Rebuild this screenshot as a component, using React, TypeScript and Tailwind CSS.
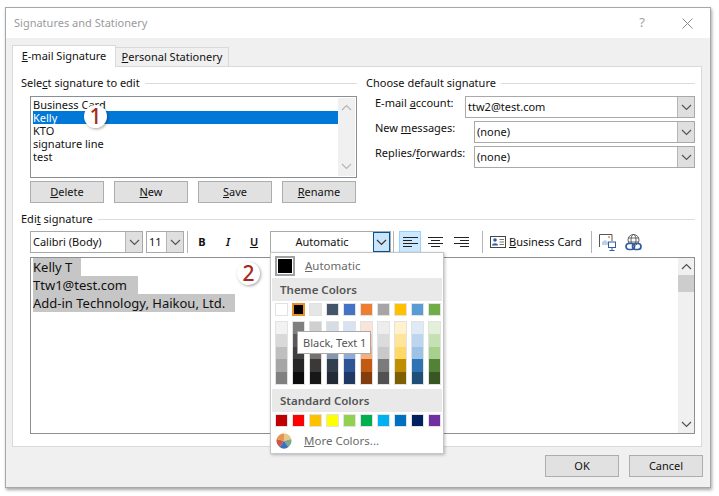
import type { ReactNode } from 'react';

const themeTop = [
  'bg-[#ffffff]', 'bg-[#000000]', 'bg-[#e7e6e6]', 'bg-[#44546a]', 'bg-[#4472c4]',
  'bg-[#ed7d31]', 'bg-[#a5a5a5]', 'bg-[#ffc000]', 'bg-[#5b9bd5]', 'bg-[#70ad47]',
];

const themeShades = [
  ['bg-[#f2f2f2]', 'bg-[#d9d9d9]', 'bg-[#bfbfbf]', 'bg-[#a6a6a6]', 'bg-[#808080]'],
  ['bg-[#7f7f7f]', 'bg-[#595959]', 'bg-[#404040]', 'bg-[#262626]', 'bg-[#0d0d0d]'],
  ['bg-[#d0cece]', 'bg-[#afabab]', 'bg-[#767171]', 'bg-[#3b3838]', 'bg-[#181717]'],
  ['bg-[#d6dce4]', 'bg-[#adb9ca]', 'bg-[#8496b0]', 'bg-[#323f4f]', 'bg-[#222a35]'],
  ['bg-[#d9e2f3]', 'bg-[#b4c6e7]', 'bg-[#8eaadb]', 'bg-[#2f5496]', 'bg-[#1f3864]'],
  ['bg-[#fbe4d5]', 'bg-[#f7caac]', 'bg-[#f4b083]', 'bg-[#c45911]', 'bg-[#833c0b]'],
  ['bg-[#ededed]', 'bg-[#dbdbdb]', 'bg-[#c9c9c9]', 'bg-[#7b7b7b]', 'bg-[#525252]'],
  ['bg-[#fff2cc]', 'bg-[#ffe599]', 'bg-[#ffd966]', 'bg-[#bf8f00]', 'bg-[#7f6000]'],
  ['bg-[#deeaf6]', 'bg-[#bdd6ee]', 'bg-[#9cc2e5]', 'bg-[#2e74b5]', 'bg-[#1f4e79]'],
  ['bg-[#e2efd9]', 'bg-[#c5e0b3]', 'bg-[#a8d08d]', 'bg-[#538135]', 'bg-[#375623]'],
];

const standard = [
  'bg-[#c00000]', 'bg-[#ff0000]', 'bg-[#ffc000]', 'bg-[#ffff00]', 'bg-[#92d050]',
  'bg-[#00b050]', 'bg-[#00b0f0]', 'bg-[#0070c0]', 'bg-[#002060]', 'bg-[#7030a0]',
];

function Chevron({ up = false }: { up?: boolean }) {
  return (
    <svg width="11" height="7" viewBox="0 0 11 7" fill="none" stroke="currentColor" strokeWidth="1.2">
      <path d={up ? 'M1 6 L5.5 1.5 L10 6' : 'M1 1 L5.5 5.5 L10 1'} />
    </svg>
  );
}

function Group({ label, className }: { label: ReactNode; className: string }) {
  return (
    <div className={`flex items-center gap-[5px] h-[14px] ${className}`}>
      <span className="whitespace-nowrap">{label}</span>
      <div className="flex-1 h-px bg-[#dcdcdc]" />
    </div>
  );
}

function Combo({ value, className }: { value: string; className: string }) {
  return (
    <div className={`h-[22px] flex border border-[#a9a9a9] bg-white ${className}`}>
      <span className="flex-1 pl-[2px] leading-[19px] whitespace-nowrap">{value}</span>
      <div className="w-[17px] bg-[#dfdfdf] border-l border-[#b5b5b5] flex items-center justify-center text-[#555555]">
        <Chevron />
      </div>
    </div>
  );
}

function Btn({ children, className = 'w-[74px]' }: { children: ReactNode; className?: string }) {
  return (
    <div className={`h-[22px] bg-[#e1e1e1] border border-[#adadad] flex items-center justify-center ${className}`}>
      <span>{children}</span>
    </div>
  );
}

function Sep() {
  return <div className="w-px h-[22px] bg-[#b4b4b4]" />;
}

function Field({ label, value, combo }: { label: ReactNode; value: string; combo: string }) {
  return (
    <div className="flex justify-between h-[22px] pl-[9px]">
      <span className="leading-[14px] whitespace-nowrap">{label}</span>
      <Combo value={value} className={combo} />
    </div>
  );
}

function Swatch({ color, className = 'border' }: { color: string; className?: string }) {
  return <div className={`w-[13px] h-[13px] border-[#e2e2e2] ${color} ${className}`} />;
}

function Badge({ n, className }: { n: string; className: string }) {
  return (
    <div className={`absolute w-[23px] h-[23px] rounded-full bg-white shadow-[1px_1px_3px_rgba(0,0,0,0.35)] flex items-center justify-center text-[21px] font-medium text-[#a52a1c] ${className}`}>
      {n}
    </div>
  );
}

function ColorMenu() {
  return (
    <div className="absolute left-[270px] top-[252px] w-[174px] h-[202px] bg-white border border-[#c6c6c6] shadow-[1px_1px_3px_rgba(0,0,0,0.25)] px-[1px] text-[11.5px]">
      <div className="flex items-center h-[25px] pl-[3px]">
        <div className="w-[20px] h-[20px] border-2 border-[#a0a0a0] p-px bg-white">
          <div className="w-full h-full bg-black" />
        </div>
        <span className="ml-[10px] text-[#6a6a6a]"><u>A</u>utomatic</span>
      </div>
      <div className="h-[23px] bg-[#e9e9e9] pl-[8px] leading-[23px] font-semibold text-[#555555]">Theme Colors</div>
      <div className="flex gap-[4px] pl-[3px] mt-[2px]">
        {themeTop.map((c, i) => (
          <Swatch key={c} color={c} className={i === 1 ? 'border-2 border-[#e8912d]' : 'border'} />
        ))}
      </div>
      <div className="flex gap-[4px] pl-[3px] mt-[5px]">
        {themeShades.map((col, i) => (
          <div key={i} className="w-[13px] h-[64px] border border-[#e2e2e2] flex flex-col">
            {col.map((c) => <div key={c} className={`flex-1 ${c}`} />)}
          </div>
        ))}
      </div>
      <div className="h-[23px] bg-[#e9e9e9] pl-[8px] leading-[23px] font-semibold text-[#555555] mt-[4px]">Standard Colors</div>
      <div className="flex gap-[4px] pl-[3px] mt-[2px]">
        {standard.map((c) => <Swatch key={c} color={c} />)}
      </div>
      <div className="flex items-center pl-[4px] mt-[5px] h-[18px]">
        <svg width="16" height="16" viewBox="0 0 16 16">
          <path d="M8 8 L8 0.5 A7.5 7.5 0 0 1 15.2 6 Z" fill="#e8c887" />
          <path d="M8 8 L15.2 6 A7.5 7.5 0 0 1 12.5 14 Z" fill="#7fa88c" />
          <path d="M8 8 L12.5 14 A7.5 7.5 0 0 1 3.5 14 Z" fill="#3f6fb5" />
          <path d="M8 8 L3.5 14 A7.5 7.5 0 0 1 0.8 6 Z" fill="#c9574a" />
          <path d="M8 8 L0.8 6 A7.5 7.5 0 0 1 8 0.5 Z" fill="#e8954f" />
        </svg>
        <span className="ml-[12px] text-[#6a6a6a]"><u>M</u>ore Colors...</span>
      </div>
    </div>
  );
}

export default function App() {
  return (
    <div className="relative w-[719px] h-[496px] bg-white pt-[7px] pl-[5px] text-[11px] text-[#111111] overflow-hidden font-['Noto_Sans',sans-serif]">
      <div className="w-[706px] h-[481px] border border-[#a8a8a8] shadow-[1px_2px_3px_rgba(0,0,0,0.35)] flex flex-col bg-[#f0f0f0]">
        <div className="h-[30px] bg-white flex items-center pl-[8px] pr-[17px] shrink-0">
          <span className="text-[11px] text-[#9b9b9b]">Signatures and Stationery</span>
          <span className="ml-auto mr-[37px] text-[13px] text-[#a0a0a0]">?</span>
          <svg width="11" height="11" viewBox="0 0 11 11" stroke="#8c8c8c" strokeWidth="1" fill="none">
            <path d="M0.5 0.5 L10.5 10.5 M10.5 0.5 L0.5 10.5" />
          </svg>
        </div>

        <div className="flex items-end pl-[6px] h-[28px] shrink-0">
          <div className="w-[104px] h-[22px] bg-white border border-b-0 border-[#d9d9d9] flex items-center justify-center -mb-px relative z-10">
            <span><u>E</u>-mail Signature</span>
          </div>
          <div className="w-[113px] h-[19px] pt-px bg-[#f0f0f0] border border-b-0 border-l-0 border-[#d9d9d9] flex items-center justify-center">
            <span><u>P</u>ersonal Stationery</span>
          </div>
        </div>

        <div className="ml-[6px] w-[690px] h-[381px] shrink-0 bg-white border border-[#d9d9d9] pl-[8px] pr-[6px] pt-[9px]">
          <div className="flex h-[127px]">
            <div className="w-[345px]">
              <Group label={<>Sele<u>c</u>t signature to edit</>} className="w-[336px]" />
              <div className="ml-[9px] mt-[6px] w-[327px] h-[82px] border border-[#8a8f96] p-px flex">
                <div className="flex-1 pl-px leading-[13px]">
                  <div>Business Card</div>
                  <div className="bg-[#0078d7] text-white">Kelly</div>
                  <div>KTO</div>
                  <div>signature line</div>
                  <div>test</div>
                </div>
                <div className="w-[17px] bg-[#f0f0f0] flex flex-col items-center justify-between py-[6px] text-[#b5b5b5]">
                  <Chevron up />
                  <Chevron />
                </div>
              </div>
              <div className="ml-[9px] mt-[3px] flex gap-[10px]">
                <Btn><u>D</u>elete</Btn>
                <Btn><u>N</u>ew</Btn>
                <Btn><u>S</u>ave</Btn>
                <Btn><u>R</u>ename</Btn>
              </div>
            </div>
            <div className="w-[329px]">
              <Group label="Choose default signature" className="" />
              <div className="mt-[6px] flex flex-col gap-[3px]">
                <Field label={<>E-mail <u>a</u>ccount:</>} value="ttw2@test.com" combo="w-[230px]" />
                <Field label={<>New <u>m</u>essages:</>} value="(none)" combo="w-[221px]" />
                <Field label={<>Replies/<u>f</u>orwards:</>} value="(none)" combo="w-[221px]" />
              </div>
            </div>
          </div>

          <div className="mt-[9px]">
            <Group label={<>Edi<u>t</u> signature</>} className="w-[674px]" />
          </div>

          <div className="ml-[9px] mt-[5px] h-[22px] flex items-center">
            <Combo value="Calibri (Body)" className="w-[113px]" />
            <Combo value="11" className="w-[38px] ml-[3px]" />
            <div className="ml-[3px]"><Sep /></div>
            <div className="w-[26px] ml-[1px] text-center font-bold">B</div>
            <div className="w-[26px] text-center italic font-semibold">I</div>
            <div className="w-[26px] text-center font-semibold underline">U</div>
            <div className="ml-[3px] w-[121px] h-[22px] border border-[#a9a9a9] bg-white flex">
              <span className="flex-1 text-center leading-[19px]">Automatic</span>
              <div className="w-[17px] bg-[#cce4f7] border border-[#005499] flex items-center justify-center text-[#333333]">
                <Chevron />
              </div>
            </div>
            <div className="ml-[2px]"><Sep /></div>
            <div className="ml-[5px] w-[22px] h-[22px] bg-[#cce8ff] border border-[#99d1ff] flex items-center justify-center">
              <svg width="15" height="11" viewBox="0 0 15 11" stroke="#222222" strokeWidth="1"><path d="M0 0.5H15M0 3.5H9M0 6.5H15M0 9.5H9" /></svg>
            </div>
            <div className="ml-[7px] w-[15px] flex items-center">
              <svg width="15" height="11" viewBox="0 0 15 11" stroke="#222222" strokeWidth="1"><path d="M0 0.5H15M3 3.5H12M0 6.5H15M3 9.5H12" /></svg>
            </div>
            <div className="ml-[11px] w-[15px] flex items-center">
              <svg width="15" height="11" viewBox="0 0 15 11" stroke="#222222" strokeWidth="1"><path d="M0 0.5H15M6 3.5H15M0 6.5H15M6 9.5H15" /></svg>
            </div>
            <div className="ml-[13px]"><Sep /></div>
            <svg className="ml-[7px]" width="16" height="12" viewBox="0 0 16 12" fill="none">
              <rect x="0.5" y="0.5" width="15" height="11" stroke="#444444" />
              <circle cx="5" cy="4" r="1.8" fill="#2f5c9e" />
              <path d="M2 9.5 C2 6.5 8 6.5 8 9.5 Z" fill="#2f5c9e" />
              <path d="M9.5 3.5H14M9.5 6H14M9.5 8.5H14" stroke="#777777" />
            </svg>
            <span className="ml-[3px] w-[72px] whitespace-nowrap"><u>B</u>usiness Card</span>
            <div className="ml-[10px]"><Sep /></div>
            <svg className="ml-[7px]" width="17" height="17" viewBox="0 0 17 17" fill="none">
              <path d="M0.5 13V0.5H13V7" stroke="#555555" />
              <path d="M3 11 L3 8 L6 6 L9 8 L9 11 Z" fill="#bcd0e6" />
              <rect x="9" y="2" width="2" height="2" fill="#eeb060" />
              <rect x="9.5" y="8" width="7" height="5.5" fill="#ffffff" stroke="#2f5c9e" />
              <path d="M13 13.5V16M10.5 16.5H15.5" stroke="#2f5c9e" />
            </svg>
            <svg className="ml-[9px]" width="17" height="17" viewBox="0 0 17 17" fill="none">
              <circle cx="8.5" cy="6" r="5.5" stroke="#555555" strokeWidth="0.9" />
              <ellipse cx="8.5" cy="6" rx="2.5" ry="5.5" stroke="#555555" strokeWidth="0.9" />
              <path d="M3 4H14M3 8H14" stroke="#555555" strokeWidth="0.9" />
              <rect x="1" y="9.5" width="8.5" height="6" rx="3" fill="#ffffff" stroke="#2f5c9e" strokeWidth="1.7" />
              <rect x="7.5" y="9.5" width="8.5" height="6" rx="3" stroke="#2f5c9e" strokeWidth="1.7" />
            </svg>
          </div>

          <div className="ml-[9px] mt-[4px] w-[665px] h-[177px] border border-[#8a8f96] flex">
            <div className="flex-1 pl-[2px] text-[13px] leading-[18px]">
              <div className="bg-[#c6c6c6] w-[48px] whitespace-nowrap">Kelly T</div>
              <div className="bg-[#c6c6c6] w-[105px] whitespace-nowrap">Ttw1@test.com</div>
              <div className="bg-[#c6c6c6] w-[202px] whitespace-nowrap">Add-in Technology, Haikou, Ltd.</div>
            </div>
            <div className="w-[16px] bg-[#f0f0f0] flex flex-col items-center py-[5px] text-[#505050]">
              <Chevron up />
              <div className="w-full h-[17px] bg-[#cdcdcd] mt-[5px]" />
              <div className="mt-auto"><Chevron /></div>
            </div>
          </div>
        </div>

        <div className="flex justify-end gap-[10px] pr-[7px] pt-[8px]">
          <Btn className="w-[74px]">OK</Btn>
          <Btn className="w-[74px]">Cancel</Btn>
        </div>
      </div>

      <Badge n="1" className="left-[84px] top-[105px]" />
      <Badge n="2" className="left-[237px] top-[262px]" />
      <ColorMenu />
      <div className="absolute left-[297px] top-[331px] w-[74px] h-[23px] bg-white border border-[#a9a9a9] text-[#555555] leading-[21px] pl-[5px] whitespace-nowrap">
        Black, Text 1
      </div>
    </div>
  );
}
